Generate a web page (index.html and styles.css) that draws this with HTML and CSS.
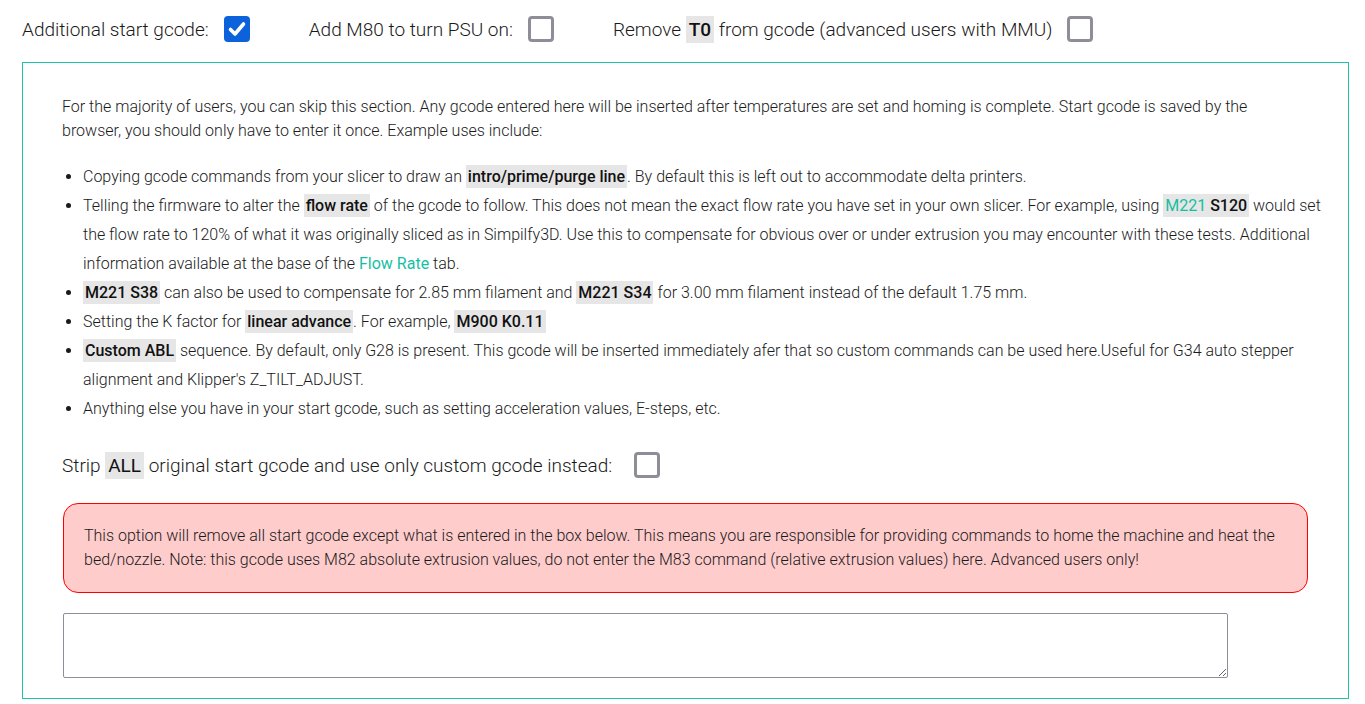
FILE: index.html
```html
<!DOCTYPE html>
<html lang="en">
<head>
<meta charset="utf-8">
<title>Start gcode</title>
<link rel="stylesheet" href="styles.css">
</head>
<body>
<div class="top-row">
  <div class="opt">
    <span class="opt-label">Additional start gcode:</span>
    <span class="cb checked"><svg viewBox="0 0 26 26" width="26" height="26"><path d="M6.5 13.5 L11 18 L19.5 8" fill="none" stroke="#fff" stroke-width="3.6" stroke-linecap="round" stroke-linejoin="round"/></svg></span>
  </div>
  <div class="opt">
    <span class="opt-label">Add M80 to turn PSU on:</span>
    <span class="cb"></span>
  </div>
  <div class="opt">
    <span class="opt-label">Remove <code class="big">T0</code> from gcode (advanced users with MMU)</span>
    <span class="cb"></span>
  </div>
</div>

<div class="panel">
  <p class="intro">For the majority of users, you can skip this section. Any gcode entered here will be inserted after temperatures are set and homing is complete. Start gcode is saved by the browser, you should only have to enter it once. Example uses include:</p>
  <ul class="uses">
    <li>Copying gcode commands from your slicer to draw an <code>intro/prime/purge line</code>. By default this is left out to accommodate delta printers.</li>
    <li>Telling the firmware to alter the <code>flow rate</code> of the gcode to follow. This does not mean the exact flow rate you have set in your own slicer. For example, using <code><span class="teal">M221</span> S120</code> would set the flow rate to 120% of what it was originally sliced as in Simpilfy3D. Use this to compensate for obvious over or under extrusion you may encounter with these tests. Additional information available at the base of the <span class="teal">Flow Rate</span> tab.</li>
    <li><code>M221 S38</code> can also be used to compensate for 2.85 mm filament and <code>M221 S34</code> for 3.00 mm filament instead of the default 1.75 mm.</li>
    <li>Setting the K factor for <code>linear advance</code>. For example, <code>M900 K0.11</code></li>
    <li><code>Custom ABL</code> sequence. By default, only G28 is present. This gcode will be inserted immediately afer that so custom commands can be used here.Useful for G34 auto stepper alignment and Klipper's Z_TILT_ADJUST.</li>
    <li>Anything else you have in your start gcode, such as setting acceleration values, E-steps, etc.</li>
  </ul>
  <div class="strip-row">
    <span class="opt-label">Strip <code class="big plain">ALL</code> original start gcode and use only custom gcode instead:</span>
    <span class="cb"></span>
  </div>
  <div class="alert">This option will remove all start gcode except what is entered in the box below. This means you are responsible for providing commands to home the machine and heat the bed/nozzle. Note: this gcode uses M82 absolute extrusion values, do not enter the M83 command (relative extrusion values) here. Advanced users only!</div>
  <textarea class="gcode-box"></textarea>
</div>
</body>
</html>
```

FILE: styles.css
```css
html, body {
  margin: 0;
  padding: 0;
  background: #fff;
}
body {
  font-family: Roboto, "Liberation Sans", Arial, sans-serif;
  font-weight: 300;
  color: #1a1a1a;
}
.top-row {
  display: flex;
  align-items: center;
  gap: 59px;
  padding: 15px 0 0 22px;
  height: 28px;
}
.opt {
  display: flex;
  align-items: center;
  gap: 15px;
}
.opt-label {
  font-size: 19px;
  color: #1a1a1a;
}
code {
  font-family: inherit;
  font-weight: 500;
  background: #e6e6e6;
  padding: 2px 2px;
  color: #111;
}
code.big {
  padding: 2px 3px;
}
code.plain {
  font-weight: 400;
}
.cb {
  display: inline-block;
  box-sizing: border-box;
  width: 26px;
  height: 26px;
  border: 3px solid #8f8e98;
  border-radius: 4px;
  background: #fff;
  flex: none;
}
.cb.checked {
  border: none;
  background: #0b62da;
}
.cb.checked svg {
  display: block;
}
.panel {
  margin: 19px 16px 0 22px;
  border: 1px solid #1bc3a8;
  padding: 32px 40px 20px 40px;
}
.intro {
  margin: 0 0 19px -1px;
  font-size: 16px;
  line-height: 24px;
}
.uses {
  margin: 0 -14px 0 -1px;
  padding-left: 21px;
  font-size: 16px;
  line-height: 29px;
}
.teal {
  color: #16bfa3;
  font-weight: 400;
}
.strip-row {
  display: flex;
  align-items: center;
  gap: 22px;
  margin: 29px 0 0 -1px;
  height: 26px;
}
.alert {
  margin-top: 25px;
  background: #ffcccc;
  border: 1px solid #f00;
  border-radius: 15px;
  padding: 20px 20px;
  font-size: 16px;
  line-height: 24px;
}
.gcode-box {
  display: block;
  box-sizing: border-box;
  margin-top: 20px;
  width: 1165px;
  height: 65px;
  border: 1px solid #8f8e98;
  border-radius: 2px;
  background: #fff;
  font-family: inherit;
}
```
